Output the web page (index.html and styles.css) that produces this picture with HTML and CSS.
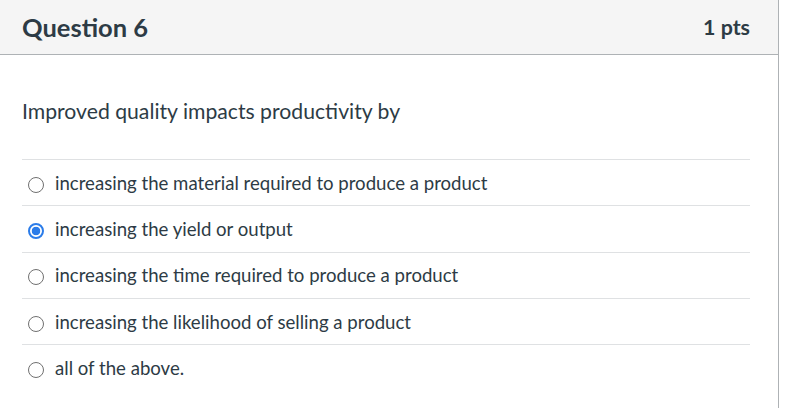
FILE: index.html
```html
<!DOCTYPE html>
<html>
<head>
<meta charset="utf-8">
<link rel="stylesheet" href="styles.css">
</head>
<body>
<div class="question">
  <div class="header">
    <h2 class="title">Question 6</h2>
    <span class="pts">1 pts</span>
  </div>
  <div class="content">
    <p class="prompt">Improved quality impacts productivity by</p>
    <div class="answers">
      <label class="answer"><span class="radio"></span><span class="text">increasing the material required to produce a product</span></label>
      <label class="answer"><span class="radio checked"></span><span class="text">increasing the yield or output</span></label>
      <label class="answer"><span class="radio"></span><span class="text">increasing the time required to produce a product</span></label>
      <label class="answer"><span class="radio"></span><span class="text">increasing the likelihood of selling a product</span></label>
      <label class="answer"><span class="radio"></span><span class="text">all of the above.</span></label>
    </div>
  </div>
</div>
</body>
</html>
```
FILE: styles.css
```css
html, body {
  margin: 0;
  padding: 0;
  background: #fff;
}
body {
  font-family: Lato, "Noto Sans", sans-serif;
  color: #2d3b45;
  width: 788px;
  height: 408px;
  overflow: hidden;
}
.question {
  width: 778px;
  height: 408px;
  border-right: 1px solid #aeb2b5;
  box-sizing: content-box;
}
.header {
  display: flex;
  justify-content: space-between;
  align-items: center;
  height: 54px;
  background: #f5f5f5;
  border-bottom: 1px solid #aeb2b5;
  padding: 0 28px 0 22px;
}
.title {
  margin: 0;
  font-size: 25.5px;
  font-weight: 700;
  color: #2d3b45;
}
.pts {
  font-size: 21.4px;
  font-weight: 700;
  color: #2d3b45;
}
.content {
  padding: 0 28px 0 22px;
}
.prompt {
  margin: 0;
  padding-top: 44px;
  height: 60px;
  font-size: 21.2px;
  line-height: 24px;
}
.answers {
  display: flex;
  flex-direction: column;
}
.answer {
  display: flex;
  align-items: center;
  height: 45.3px;
  border-top: 1px solid #dfe1e3;
  font-size: 18.6px;
}
.radio {
  width: 14px;
  height: 14px;
  border: 1px solid #707070;
  border-radius: 50%;
  margin: 4px 11px 0 6px;
  flex: none;
  box-sizing: content-box;
}
.radio.checked {
  border: 2px solid #2b7ce9;
  width: 12px;
  height: 12px;
  background: radial-gradient(circle, #2b7ce9 0 4px, #fff 4.6px);
}
```
